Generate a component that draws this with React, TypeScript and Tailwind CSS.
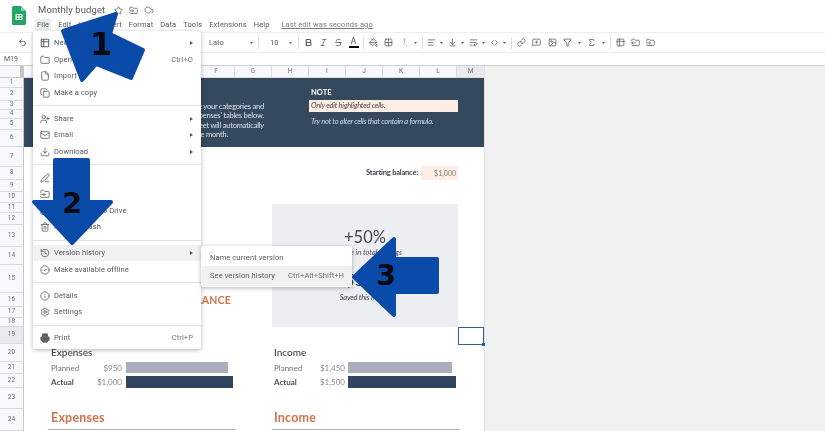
import {
  ArrowDownToLine,
  Bold,
  ChevronsLeftRight,
  CircleCheck,
  CloudCheck,
  Copy,
  Download,
  File,
  Filter,
  Folder,
  FolderInput,
  FolderOutput,
  Grid2x2,
  HardDrive,
  History,
  Image,
  Info,
  Italic,
  Link,
  Mail,
  Merge,
  MessageSquarePlus,
  PaintBucket,
  PenLine,
  Printer,
  Settings,
  Sigma,
  Star,
  Strikethrough,
  Table2,
  Trash2,
  TextAlignStart,
  Undo2,
  UserPlus,
  WrapText,
} from 'lucide-react';

const rows = [10, 13, 9, 9, 11, 17, 20, 13, 12, 11, 10, 12, 22, 18, 28, 14, 11, 9, 17, 18, 12, 14, 21, 22];
const columns = [
  ['A', 'w-[26px]'],
  ['B', 'w-[37px]'],
  ['C', 'w-[37px]'],
  ['D', 'w-[37px]'],
  ['E', 'w-[37px]'],
  ['F', 'w-[37px]'],
  ['G', 'w-[37px]'],
  ['H', 'w-[37px]'],
  ['I', 'w-[37px]'],
  ['J', 'w-[37px]'],
  ['K', 'w-[37px]'],
  ['L', 'w-[37px]'],
];
const menus = ['Edit', 'View', 'Insert', 'Format', 'Data', 'Tools', 'Extensions', 'Help'];

function Caret() {
  return (
    <svg width="9" height="4" viewBox="0 0 9 4" className="shrink-0">
      <path d="M3 1h3L4.5 3z" fill="#5f6368" />
    </svg>
  );
}

function Tool({ children, className = 'w-[15px]' }: { children: React.ReactNode; className?: string }) {
  return <div className={`flex h-full shrink-0 items-center justify-center ${className}`}>{children}</div>;
}

function Sep() {
  return <div className="mx-[2px] h-[12px] w-px shrink-0 bg-[#dadce0]" />;
}

function MenuRow({
  icon,
  label,
  hint,
  arrow,
  active,
}: {
  icon: React.ReactNode;
  label: string;
  hint?: string;
  arrow?: boolean;
  active?: boolean;
}) {
  return (
    <div className={`flex h-[16.5px] items-center pl-[7px] pr-[8px] ${active ? 'bg-[#f1f1f1]' : ''}`}>
      <div className="flex w-[14px] shrink-0 items-center text-[#5f6368]">{icon}</div>
      <span className="text-[7.5px] tracking-[0.1px] text-[#55585c]">{label}</span>
      {hint && <span className="ml-auto text-[7.5px] tracking-[0.1px] text-[#6f7377]">{hint}</span>}
      {arrow && <div className="ml-auto h-0 w-0 border-y-[2px] border-l-[3px] border-y-transparent border-l-[#55585c]" />}
    </div>
  );
}

function Divider() {
  return (
    <div className="flex h-[9.5px] items-center">
      <div className="h-px w-full bg-[#e3e3e3]" />
    </div>
  );
}

function BudgetBars({
  title,
  planned,
  actual,
  plannedBar,
  actualBar,
  className,
}: {
  title: string;
  planned: string;
  actual: string;
  plannedBar: string;
  actualBar: string;
  className: string;
}) {
  return (
    <div className={`w-[186px] ${className}`}>
      <div className="h-[17px] text-[10px] leading-[17px] font-medium text-[#3a3f45]">{title}</div>
      <div className="flex h-[13px] items-center text-[8px]">
        <span className="w-[40px] text-[#6d7278]">Planned</span>
        <span className="w-[31px] text-right text-[#858a90]">{planned}</span>
        <div className={`h-[11px] bg-[#a9afba] ${plannedBar}`} />
      </div>
      <div className="mt-[1px] flex h-[13px] items-center text-[8px]">
        <span className="w-[40px] font-bold text-[#4b5158]">Actual</span>
        <span className="w-[31px] text-right text-[#858a90]">{actual}</span>
        <div className={`h-[12px] bg-[#2f4560] ${actualBar}`} />
      </div>
    </div>
  );
}

function SectionHead({ title, className }: { title: string; className: string }) {
  return (
    <div className={`mt-[20px] w-[188px] border-b border-[#b5b5b5] pb-[1px] text-[12.5px] leading-[20px] font-bold tracking-[0.2px] text-[#d0724c] ${className}`}>
      {title}
    </div>
  );
}

export default function App() {
  return (
    <div className="relative h-[431px] w-[825px] overflow-hidden bg-white font-['Roboto',sans-serif] blur-[0.4px]">
      {/* title + menu bar */}
      <header className="flex h-[32px]">
        <div className="flex w-[38px] shrink-0 justify-center pt-[6px] pr-[1px]">
          <svg width="14" height="19" viewBox="0 0 14 19">
            <path d="M1.5 0H9l5 5v12.5a1.5 1.5 0 0 1-1.5 1.5h-11A1.5 1.5 0 0 1 0 17.500v-16A1.500 1.500 0 0 1 1.500 0z" fill="#23a566" />
            <path d="M9 0l5 5H9z" fill="#8ed1b1" />
            <path d="M3.500 8h7v6h-7zM4.500 9v1.500h2V9zm3 0v1.500h2V9zm-3 2.500V13h2v-1.500zm3 0V13h2v-1.500z" fill="#fff" fillRule="evenodd" />
          </svg>
        </div>
        <div>
          <div className="flex h-[19px] items-center pt-[1px]">
            <span className="w-[76px] text-[9.5px] tracking-[0.1px] text-[#55595e]">Monthly budget</span>
            <Star size={9} className="text-[#5f6368]" />
            <FolderInput size={9} className="ml-[6px] text-[#5f6368]" />
            <CloudCheck size={10} className="ml-[6px] text-[#5f6368]" />
          </div>
          <div className="flex h-[11px] items-center text-[7.5px] tracking-[0.1px] text-[#55595e]">
            <span className="-ml-[3px] rounded-[2px] bg-[#e8f0e9] px-[2px]">File</span>
            {menus.map((m) => (
              <span key={m} className="ml-[7px]">
                {m}
              </span>
            ))}
            <span className="ml-[12px] text-[#777b80] underline">Last edit was seconds ago</span>
          </div>
        </div>
      </header>

      {/* toolbar */}
      <div className="flex h-[21px] items-center border-y border-[#eeeeee] bg-white text-[7.5px] text-[#55595e]">
        <Undo2 size={9} className="ml-[18px] shrink-0 text-[#444746]" />
        <span className="ml-[182px] w-[38px] shrink-0">Lato</span>
        <Caret />
        <Sep />
        <span className="ml-[9px] w-[16px] shrink-0">10</span>
        <Caret />
        <div className="ml-[1px] flex h-full items-center">
          <Sep />
        </div>
        <Tool><Bold size={9} strokeWidth={3} /></Tool>
        <Tool><Italic size={9} /></Tool>
        <Tool><Strikethrough size={9} /></Tool>
        <Tool>
          <div className="flex flex-col items-center">
            <span className="text-[9px] leading-[9px]">A</span>
            <div className="h-[2px] w-[10px] bg-black" />
          </div>
        </Tool>
        <Sep />
        <Tool className="w-[14px]"><PaintBucket size={9} /></Tool>
        <Tool className="w-[17px]"><Grid2x2 size={9} /></Tool>
        <Tool className="w-[14px]"><Merge size={9} className="text-[#b4b7bb]" /></Tool>
        <Caret />
        <Sep />
        <Tool className="w-[12px]"><TextAlignStart size={9} /></Tool>
        <Caret />
        <Tool className="w-[12px]"><ArrowDownToLine size={9} /></Tool>
        <Caret />
        <Tool className="w-[12px]"><WrapText size={9} /></Tool>
        <Caret />
        <Tool className="w-[12px]"><ChevronsLeftRight size={9} /></Tool>
        <Caret />
        <Sep />
        <Tool><Link size={9} /></Tool>
        <Tool><MessageSquarePlus size={9} /></Tool>
        <Tool className="w-[16px]"><Image size={9} /></Tool>
        <Tool className="w-[15px]"><Filter size={9} /></Tool>
        <Caret />
        <Tool className="w-[15px]"><Sigma size={9} /></Tool>
        <Caret />
        <Sep />
        <Tool><Table2 size={9} /></Tool>
        <Tool><FolderOutput size={9} /></Tool>
        <Tool><FolderInput size={9} /></Tool>
      </div>

      {/* formula bar */}
      <div className="flex h-[13px] items-center border-b border-[#cfcfcf] pl-[4px] text-[7px] text-[#55595e]">M19</div>

      {/* sheet */}
      <div className="flex h-[366px]">
        <div className="w-[24px] shrink-0 border-r border-[#c9c9c9] bg-[#f8f9fa]">
          <div className="h-[12px] border-r-[3px] border-b border-[#c4c7c5]" />
          {rows.map((h, i) => (
            <div
              key={i}
              className={`flex items-center justify-center border-b border-[#dcdcdc] text-[6.5px] text-[#6d7175] ${i === 18 ? 'bg-[#e8eaed]' : ''}`}
              style={{ height: h }}
            >
              {i + 1}
            </div>
          ))}
        </div>

        <div className="relative w-[460px] shrink-0 font-['Lato',sans-serif]">
          <div className="flex h-[12px] border-b border-[#dcdcdc] bg-[#f8f9fa] font-['Roboto',sans-serif] text-[6.5px] text-[#6d7175]">
            {columns.map(([name, w]) => (
              <div key={name} className={`flex items-center justify-center border-r border-[#dcdcdc] ${w}`}>
                {name}
              </div>
            ))}
            <div className="flex flex-1 items-center justify-center bg-[#e8eaed]">M</div>
          </div>

          {/* banner */}
          <div className="flex h-[69px] bg-[#34495e]">
            <div className="w-[240px] pt-[24px] text-right text-[7.5px] leading-[9.3px] tracking-[-0.2px] whitespace-nowrap text-[#dfe4ea]">
              <p>Update your categories and</p>
              <p>&apos;Income&apos; and &apos;Expenses&apos; tables below.</p>
              <p>The sheet will automatically</p>
              <p className="mr-[36px]">update through the month.</p>
            </div>
            <div className="ml-[45px] w-[149px] pt-[10px]">
              <p className="pl-[2px] text-[7.5px] leading-[10px] font-bold text-white">NOTE</p>
              <p className="mt-[2px] h-[12px] bg-[#fdeee5] pl-[2px] text-[7.5px] leading-[12px] tracking-[-0.25px] text-[#5b4f4b] italic">
                Only edit highlighted cells.
              </p>
              <p className="mt-[5px] pl-[2px] text-[7.5px] leading-[10px] tracking-[-0.25px] whitespace-nowrap text-[#d5dbe3] italic">
                Try not to alter cells that contain a formula.
              </p>
            </div>
          </div>

          {/* starting balance */}
          <div className="mt-[19px] flex h-[14px] items-center justify-end pr-[26px] text-[7.5px]">
            <span className="font-bold tracking-[-0.2px] text-[#3f454b]">Starting balance:</span>
            <span className="ml-[3px] h-[14px] w-[37px] bg-[#fdeee5] pr-[2px] text-right text-[7px] leading-[14px] text-[#83807d]">$1,000</span>
          </div>

          {/* summary */}
          <div className="mt-[24px] flex h-[123px]">
            <div className="w-[207px] pt-[89px] text-right text-[10.5px] leading-[14px] font-bold tracking-[0.2px] text-[#d0724c]">
              ENDING BALANCE
            </div>
            <div className="ml-[41px] w-[186px] bg-[#eceef1] pt-[23px] text-center text-[#45494f]">
              <p className="text-[16.5px] leading-[20px]">+50%</p>
              <p className="mt-[1px] text-[7.5px] leading-[10px] italic">Increase in total savings</p>
              <p className="mt-[10px] text-[18px] leading-[22px]">$500</p>
              <p className="mt-[3px] text-[7.5px] leading-[10px] tracking-[-0.2px] italic">Saved this month</p>
            </div>
          </div>

          {/* budget bars */}
          <div className="mt-[17px] flex pl-[24px]">
            <div className="w-[224px]">
              <BudgetBars
                title="Expenses"
                planned="$950"
                actual="$1,000"
                plannedBar="ml-[4px] w-[102px]"
                actualBar="ml-[4px] w-[107px]"
                className="pl-[3px]"
              />
              <SectionHead title="Expenses" className="pl-[3px]" />
            </div>
            <div>
              <BudgetBars
                title="Income"
                planned="$1,450"
                actual="$1,500"
                plannedBar="ml-[3px] w-[104px]"
                actualBar="ml-[3px] w-[108px]"
                className="pl-[2px]"
              />
              <SectionHead title="Income" className="pl-[2px]" />
            </div>
          </div>

          {/* selected cell */}
          <div className="absolute top-[261px] left-[434px] h-[18px] w-[26px] border border-[#2f5f96]">
            <div className="absolute -right-[2px] -bottom-[2px] h-[3px] w-[3px] bg-[#1a5fb4]" />
          </div>
        </div>

        <div className="flex-1 border-l border-[#e0e0e0] bg-[#f1f1f1]" />
      </div>

      {/* file menu */}
      <div className="absolute top-[31px] left-[33px] w-[168px] rounded-[2px] bg-white pt-[3.75px] pb-[3px] shadow-[0_1px_4px_rgba(0,0,0,0.3)]">
        <MenuRow icon={<Table2 size={10} strokeWidth={2.5} />} label="New" arrow />
        <MenuRow icon={<Folder size={10} />} label="Open" hint="Ctrl+O" />
        <MenuRow icon={<File size={10} />} label="Import" />
        <MenuRow icon={<Copy size={10} />} label="Make a copy" />
        <Divider />
        <MenuRow icon={<UserPlus size={10} />} label="Share" arrow />
        <MenuRow icon={<Mail size={10} />} label="Email" arrow />
        <MenuRow icon={<Download size={10} />} label="Download" arrow />
        <Divider />
        <MenuRow icon={<PenLine size={10} />} label="Rename" />
        <MenuRow icon={<FolderInput size={10} />} label="Move" />
        <MenuRow icon={<HardDrive size={10} />} label="Add shortcut to Drive" />
        <MenuRow icon={<Trash2 size={10} />} label="Move to trash" />
        <Divider />
        <MenuRow icon={<History size={10} />} label="Version history" arrow active />
        <MenuRow icon={<CircleCheck size={10} />} label="Make available offline" />
        <Divider />
        <MenuRow icon={<Info size={10} />} label="Details" />
        <MenuRow icon={<Settings size={10} />} label="Settings" />
        <Divider />
        <MenuRow icon={<Printer size={10} fill="currentColor" />} label="Print" hint="Ctrl+P" />
      </div>

      {/* version history submenu */}
      <div className="absolute top-[246px] left-[201px] w-[151px] rounded-[2px] bg-white pt-[3px] pb-[1px] text-[7.5px] tracking-[0.1px] text-[#55585c] shadow-[0_1px_4px_rgba(0,0,0,0.3)]">
        <div className="flex h-[17px] items-center pl-[9px]">Name current version</div>
        <div className="flex h-[20px] items-center justify-between bg-[#f1f1f1] pr-[8px] pl-[9px]">
          <span>See version history</span>
          <span className="text-[#6f7377]">Ctrl+Alt+Shift+H</span>
        </div>
      </div>

      {/* callout arrows */}
      <svg width="825" height="431" viewBox="0 0 825 431" className="pointer-events-none absolute top-0 left-0">
        <g fill="#0a4aa8" stroke="#0a4aa8" strokeWidth="4" strokeLinejoin="round">
          <path d="M63 31 116 14 110 34 143 50 131 78 96 64 82 80Z" />
          <path d="M55 160H88V202H111L72 243 34 202H55Z" />
          <path d="M354 277 394 239V259H437V292H394V315Z" />
        </g>
      </svg>
      <span className="absolute top-[21px] left-[90px] font-['DejaVu_Sans',sans-serif] text-[32px] leading-[46px] font-bold text-[#0a0a14]">1</span>
      <span className="absolute top-[181px] left-[62px] font-['DejaVu_Sans',sans-serif] text-[29px] leading-[44px] font-bold text-[#0a0a14]">2</span>
      <span className="absolute top-[253px] left-[376px] font-['DejaVu_Sans',sans-serif] text-[29px] leading-[44px] font-bold text-[#0a0a14]">3</span>
    </div>
  );
}
